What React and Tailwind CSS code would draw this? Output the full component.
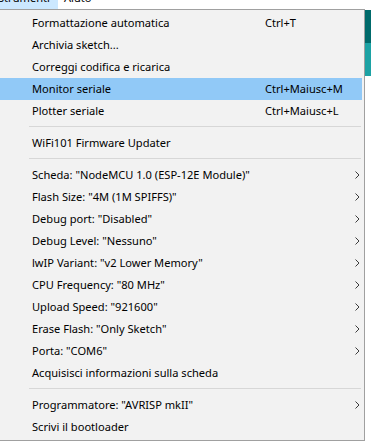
const items = [
  { label: "Formattazione automatica", shortcut: "Ctrl+T" },
  { label: "Archivia sketch..." },
  { label: "Correggi codifica e ricarica" },
  { label: "Monitor seriale", shortcut: "Ctrl+Maiusc+M", active: true },
  { label: "Plotter seriale", shortcut: "Ctrl+Maiusc+L" },
  { sep: true },
  { label: "WiFi101 Firmware Updater" },
  { sep: true },
  { label: 'Scheda: "NodeMCU 1.0 (ESP-12E Module)"', sub: true },
  { label: 'Flash Size: "4M (1M SPIFFS)"', sub: true },
  { label: 'Debug port: "Disabled"', sub: true },
  { label: 'Debug Level: "Nessuno"', sub: true },
  { label: 'lwIP Variant: "v2 Lower Memory"', sub: true },
  { label: 'CPU Frequency: "80 MHz"', sub: true },
  { label: 'Upload Speed: "921600"', sub: true },
  { label: 'Erase Flash: "Only Sketch"', sub: true },
  { label: 'Porta: "COM6"', sub: true },
  { label: "Acquisisci informazioni sulla scheda" },
  { sep: true },
  { label: 'Programmatore: "AVRISP mkII"', sub: true },
  { label: "Scrivi il bootloader" },
];

const Chevron = () => (
  <svg width="5" height="8" viewBox="0 0 5 8" className="block">
    <polyline points="0.5,0.5 4,4 0.5,7.5" fill="none" stroke="#3c3c3c" strokeWidth="1" />
  </svg>
);

const MenuItem = ({ item }) => {
  if (item.sep) {
    return (
      <div className="h-[10px] pt-[4px]">
        <div className="ml-[29px] mr-[3px] h-px bg-[#d7d7d7]" />
      </div>
    );
  }
  return (
    <div
      className={`flex items-center h-[22px] mr-[2px] pl-[32px] ${
        item.active ? "bg-[#91c9f7]" : ""
      }`}
    >
      <span className="w-[233px] shrink-0 whitespace-nowrap">{item.label}</span>
      <span className="flex-1 whitespace-nowrap">{item.shortcut}</span>
      <span className="w-[5px] mr-[2px]">{item.sub && <Chevron />}</span>
    </div>
  );
};

export default function App() {
  return (
    <div
      className="w-[376px] h-[447px] bg-white overflow-hidden text-[11.1px] text-black"
      style={{ fontFamily: '"Segoe UI", "Noto Sans", sans-serif' }}
    >
      {/* menu bar, mostly cut off */}
      <div className="h-[9px] flex overflow-hidden">
        <div className="w-[58px] bg-[#cce8ff]">
          <div className="-mt-[10px] -ml-[2px] leading-[16px]">Strumenti</div>
        </div>
        <div className="pl-[6px]">
          <div className="-mt-[10px] leading-[16px]">Aiuto</div>
        </div>
      </div>

      <div className="flex">
        <div className="w-[365px] bg-[#f2f2f2] border-t border-r border-b border-[#a0a0a0] py-[2px]">
          {items.map((item, i) => (
            <MenuItem key={i} item={item} />
          ))}
        </div>
        <div className="w-[6px] pt-[1px] flex flex-col">
          <div className="h-[33px] bg-[#006a6b]" />
          <div className="h-[33px] bg-[#1ca2a4]" />
        </div>
      </div>
    </div>
  );
}
